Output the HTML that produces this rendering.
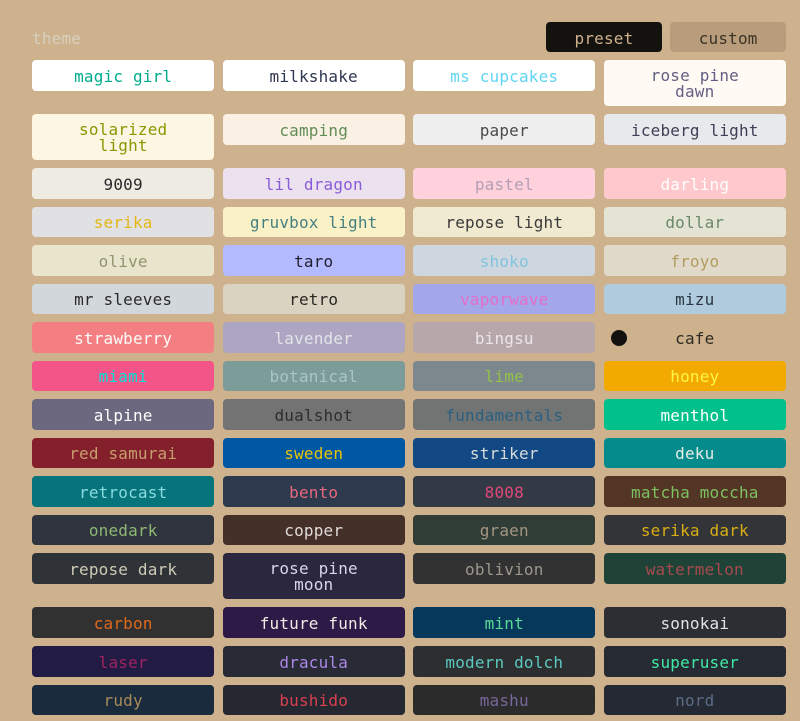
<!DOCTYPE html>
<html><head><meta charset="utf-8"><style>
*{box-sizing:border-box}
html,body{margin:0;padding:0;width:800px;height:721px;overflow:hidden;background:#ceb18d}
body{font-family:"DejaVu Sans Mono","Liberation Mono",monospace;font-size:16px;position:relative}
.t{position:absolute;left:32px;top:31px;line-height:16px;color:#d8d0bf;letter-spacing:.18px}
.h{position:absolute;top:22px;width:116.3px;height:29.6px;border-radius:4px;line-height:33.5px;text-align:center;letter-spacing:.18px}
.g{position:absolute;left:32px;top:60px;width:754px;display:grid;grid-template-columns:repeat(4,182.33px);column-gap:8.22px;row-gap:8px;grid-template-rows:46px 46px repeat(10,30.55px) 46px 30.55px 30.55px 30.55px}
.g div{height:30.55px;border-radius:4px;display:flex;align-items:center;justify-content:center;text-align:center;line-height:16px;padding:2.5px 0 0;letter-spacing:.18px}
.g div.k{height:46px;padding-top:2px}
.g div.c{position:relative}
.g div.c:before{content:"";position:absolute;left:7px;top:7.5px;width:16px;height:16px;border-radius:50%;background:#14120f}
</style></head><body>
<div class="t">theme</div>
<div class="h" style="left:545.8px;background:#14120f;color:#ceb18d">preset</div>
<div class="h" style="left:670px;background:#b89c7c;color:#3b3226">custom</div>
<div class="g">
<div style="background:#fff;color:#00ac8c">magic girl</div>
<div style="background:#fff;color:#2e3650">milkshake</div>
<div style="background:#fff;color:#5ed5f3">ms cupcakes</div>
<div class="k" style="background:#fffaf3;color:#625e84">rose pine<br>dawn</div>
<div class="k" style="background:#fdf6e3;color:#859900">solarized<br>light</div>
<div style="background:#faf1e4;color:#618c56">camping</div>
<div style="background:#eee;color:#4a4a4a">paper</div>
<div style="background:#e8e9ec;color:#3c4056">iceberg light</div>
<div style="background:#eeebe2;color:#282828">9009</div>
<div style="background:#ebe1ef;color:#8a5bd6">lil dragon</div>
<div style="background:#ffd1dc;color:#b39eb5">pastel</div>
<div style="background:#fec8cd;color:#fff">darling</div>
<div style="background:#e1e1e3;color:#e2b714">serika</div>
<div style="background:#fbf1c7;color:#458080">gruvbox light</div>
<div style="background:#efead0;color:#3a3a3a">repose light</div>
<div style="background:#e4e4d4;color:#6b886b">dollar</div>
<div style="background:#e9e5cc;color:#92946f">olive</div>
<div style="background:#b3baff;color:#221e30">taro</div>
<div style="background:#ced7e0;color:#81c4dd">shoko</div>
<div style="background:#e1dacb;color:#b29c5e">froyo</div>
<div style="background:#d1d7da;color:#2a2a2a">mr sleeves</div>
<div style="background:#dad3c1;color:#2a2823">retro</div>
<div style="background:#a4a7ea;color:#e56dca">vaporwave</div>
<div style="background:#afcbdd;color:#2a3644">mizu</div>
<div style="background:#f37f83;color:#fcfcf8">strawberry</div>
<div style="background:#ada6c2;color:#e4e3e9">lavender</div>
<div style="background:#b8a7aa;color:#ebe6ea">bingsu</div>
<div class="c" style="background:#ceb18d;color:#2e2a24">cafe</div>
<div style="background:#f35588;color:#05dfd7">miami</div>
<div style="background:#7b9c98;color:#abc6c4">botanical</div>
<div style="background:#7c878e;color:#93c247">lime</div>
<div style="background:#f2aa00;color:#fff546">honey</div>
<div style="background:#6c687f;color:#fff">alpine</div>
<div style="background:#737373;color:#2e2e2e">dualshot</div>
<div style="background:#727474;color:#2a6080">fundamentals</div>
<div style="background:#00c18c;color:#fff">menthol</div>
<div style="background:#84202c;color:#c79e6e">red samurai</div>
<div style="background:#0058a3;color:#e8c40a">sweden</div>
<div style="background:#124883;color:#d6dbd9">striker</div>
<div style="background:#058b8c;color:#e6ece6">deku</div>
<div style="background:#07737a;color:#88dbdf">retrocast</div>
<div style="background:#2d394d;color:#e8687c">bento</div>
<div style="background:#333a45;color:#e04878">8008</div>
<div style="background:#523525;color:#7ec160">matcha moccha</div>
<div style="background:#2f343f;color:#8fb873">onedark</div>
<div style="background:#442f29;color:#e0dad6">copper</div>
<div style="background:#303c36;color:#a59682">graen</div>
<div style="background:#323437;color:#d9ae14">serika dark</div>
<div style="background:#2f3338;color:#cfcbb6">repose dark</div>
<div class="k" style="background:#2a273f;color:#d8d6ec">rose pine<br>moon</div>
<div style="background:#313231;color:#9c978d">oblivion</div>
<div style="background:#1f4437;color:#a8484e">watermelon</div>
<div style="background:#313131;color:#e06a18">carbon</div>
<div style="background:#2e1a47;color:#f0ebe4">future funk</div>
<div style="background:#05385b;color:#5cdb95">mint</div>
<div style="background:#2c2e34;color:#e2e2e3">sonokai</div>
<div style="background:#221b44;color:#a02260">laser</div>
<div style="background:#282a36;color:#ab88e6">dracula</div>
<div style="background:#2d2e30;color:#5cc8c0">modern dolch</div>
<div style="background:#262a33;color:#40eaa6">superuser</div>
<div style="background:#1a2b3e;color:#a88a5a">rudy</div>
<div style="background:#252831;color:#d84050">bushido</div>
<div style="background:#2b2b2c;color:#76689a">mashu</div>
<div style="background:#242933;color:#5b6c85">nord</div>
</div>
</body></html>
